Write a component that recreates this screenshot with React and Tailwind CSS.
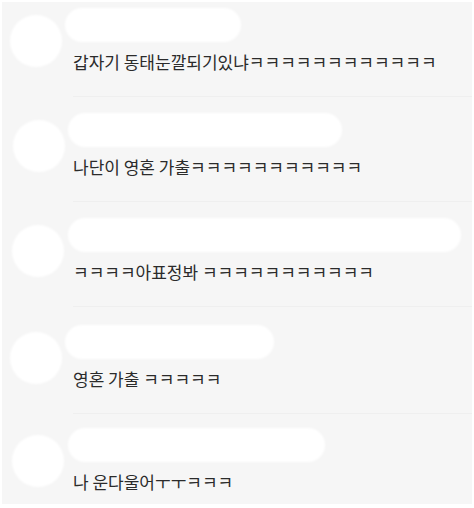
import React from 'react';

const comments = [
  { text: '갑자기 동태눈깔되기있냐ㅋㅋㅋㅋㅋㅋㅋㅋㅋㅋㅋㅋ', nameW: 'w-[176px]', row: 'h-[105px]', av: 'ml-[8px]', bar: 'ml-0' },
  { text: '나단이 영혼 가출ㅋㅋㅋㅋㅋㅋㅋㅋㅋㅋㅋ', nameW: 'w-[274px]', row: 'h-[105px]', av: 'ml-[11px]', bar: 'ml-[3px]' },
  { text: 'ㅋㅋㅋㅋ아표정봐 ㅋㅋㅋㅋㅋㅋㅋㅋㅋㅋㅋ', nameW: 'w-[393px]', row: 'h-[107px]', av: 'ml-[10px]', bar: 'ml-[3px]' },
  { text: '영혼 가출 ㅋㅋㅋㅋㅋ', nameW: 'w-[209px]', row: 'h-[103px]', av: 'ml-[8px]', bar: 'ml-0' },
  { text: '나 운다울어ㅜㅜㅋㅋㅋ', nameW: 'w-[257px]', row: 'flex-1', av: 'ml-[10px]', bar: 'ml-[3px]', last: true },
];

const CommentRow = ({ text, nameW, row, av, bar, last }) => (
  <div className={`flex ${row} pt-[6px]`}>
    <div className="w-[63px] shrink-0">
      <div className={`${av} mt-[7px] h-[52px] w-[52px] rounded-full bg-white blur-[1px]`} />
    </div>
    <div className="flex flex-1 flex-col">
      <div className={`${bar} ${nameW} h-[34px] rounded-full bg-white blur-[1px]`} />
      <p className="mt-[8px] pl-[8px] text-[17px] leading-6 text-[#2b2b2b] whitespace-nowrap">{text}</p>
      {!last && <div className="ml-[8px] mt-[22px] h-px bg-[#efefef]" />}
    </div>
  </div>
);

export default function App() {
  return (
    <div
      className="h-[508px] w-[474px] bg-white pt-[2px] pl-[2px] pr-[2px] pb-[4px]"
      style={{ fontFamily: '"Noto Sans CJK KR", "Noto Sans", sans-serif' }}
    >
      <div className="flex h-full flex-col overflow-hidden bg-[#f6f6f6]">
        {comments.map((c, i) => (
          <CommentRow key={i} {...c} />
        ))}
      </div>
    </div>
  );
}
